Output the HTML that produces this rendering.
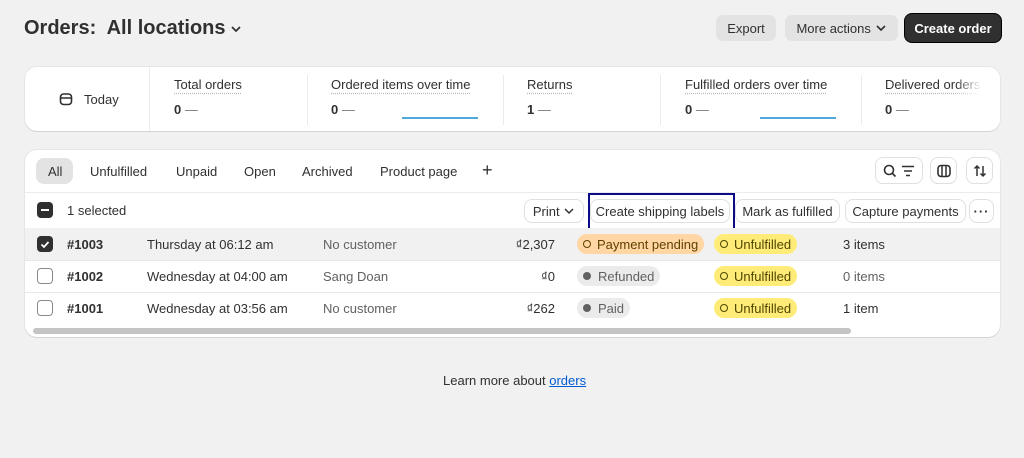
<!DOCTYPE html>
<html><head><style>
*{box-sizing:border-box;margin:0;padding:0}
body{width:1024px;height:458px;background:#f1f1f1;font-family:"Liberation Sans",sans-serif;color:#303030;position:relative;overflow:hidden;font-size:13px}
.a{position:absolute;white-space:nowrap}
.btn{position:absolute;background:#fff;border-radius:7px;box-shadow:0 0 0 1px #e0e0e0,0 1px 0 #ccc;font-size:13px;color:#303030;display:flex;align-items:center;justify-content:center}
.card{position:absolute;background:#fff;border-radius:12px;box-shadow:0 1px 0 #d4d4d4,0 0 0 1px #e6e6e6}
.dot{text-decoration:underline dotted #bbb;text-underline-offset:4px}
.pill{position:absolute;height:20px;border-radius:10px;font-size:13px;display:flex;align-items:center;padding:0 6px 0 6px}
.ring{width:8px;height:8px;border:1.5px solid currentColor;border-radius:50%;margin-right:6px}
.fill{width:8px;height:8px;background:#616161;border-radius:50%;margin-right:7px}
.cb{position:absolute;width:16px;height:16px;border-radius:4px;border:1.5px solid #8a8a8a;background:#fff}
</style></head><body>
<div class="a" style="left:24px;top:17px;font-size:20px;font-weight:bold;color:#303030">Orders:&nbsp; All locations</div>
<svg class="a" style="left:229px;top:22px" width="14" height="14"><path d="M3 5l4 4 4-4" fill="none" stroke="#303030" stroke-width="1.7"/></svg>
<div class="btn" style="left:716px;top:15px;width:60px;height:26px;background:#e3e3e3;box-shadow:none">Export</div>
<div class="btn" style="left:785px;top:15px;width:113px;height:26px;background:#e3e3e3;box-shadow:none">More actions&nbsp;<svg width="12" height="12"><path d="M2 4l4 4 4-4" fill="none" stroke="#303030" stroke-width="1.6"/></svg></div>
<div class="btn" style="left:905px;top:14px;width:96px;height:28px;background:#303030;color:#fff;font-weight:bold;box-shadow:0 0 0 1px #000">Create order</div>

<div class="card" style="left:25px;top:67px;width:975px;height:64px;overflow:hidden">
<svg class="a" style="left:34px;top:25px" width="14" height="14"><rect x="1.5" y="2" width="11" height="10.5" rx="3" fill="none" stroke="#303030" stroke-width="1.6"/><path d="M2 6h10" stroke="#303030" stroke-width="1.6"/></svg>
<div class="a" style="left:59px;top:25px">Today</div>
<div class="a" style="left:124px;top:0;width:1px;height:64px;background:#ebebeb"></div>
<div class="a dot" style="left:149px;top:10px">Total orders</div><div class="a" style="left:149px;top:35px;font-weight:bold">0 <span style="font-weight:normal;color:#777">—</span></div>
<div class="a" style="left:282px;top:8px;width:1px;height:50px;background:#ebebeb"></div>
<div class="a dot" style="left:306px;top:10px">Ordered items over time</div><div class="a" style="left:306px;top:35px;font-weight:bold">0 <span style="font-weight:normal;color:#777">—</span></div>
<div class="a" style="left:377px;top:50px;width:76px;height:2px;background:#4fa8d8"></div>
<div class="a" style="left:478px;top:8px;width:1px;height:50px;background:#ebebeb"></div>
<div class="a dot" style="left:502px;top:10px">Returns</div><div class="a" style="left:502px;top:35px;font-weight:bold">1 <span style="font-weight:normal;color:#777">—</span></div>
<div class="a" style="left:635px;top:8px;width:1px;height:50px;background:#ebebeb"></div>
<div class="a dot" style="left:660px;top:10px">Fulfilled orders over time</div><div class="a" style="left:660px;top:35px;font-weight:bold">0 <span style="font-weight:normal;color:#777">—</span></div>
<div class="a" style="left:735px;top:50px;width:76px;height:2px;background:#4fa8d8"></div>
<div class="a" style="left:836px;top:8px;width:1px;height:50px;background:#ebebeb"></div>
<div class="a dot" style="left:860px;top:10px">Delivered orders</div><div class="a" style="left:860px;top:35px;font-weight:bold">0 <span style="font-weight:normal;color:#777">—</span></div>
<div class="a" style="left:930px;top:0;width:45px;height:64px;background:linear-gradient(90deg,rgba(255,255,255,0),#fff 60%)"></div>
</div>

<div class="card" style="left:25px;top:150px;width:975px;height:187px;overflow:hidden">
<div class="a" style="left:11px;top:8px;width:37px;height:26px;background:#e3e3e3;border-radius:8px"></div>
<div class="a" style="left:23px;top:14px">All</div>
<div class="a" style="left:65px;top:14px">Unfulfilled</div>
<div class="a" style="left:151px;top:14px">Unpaid</div>
<div class="a" style="left:219px;top:14px">Open</div>
<div class="a" style="left:277px;top:14px">Archived</div>
<div class="a" style="left:355px;top:14px">Product page</div>
<div class="a" style="left:457px;top:10px;font-size:18px">+</div>
<div class="btn" style="left:851px;top:8px;width:46px;height:25px"><svg width="34" height="16"><circle cx="7" cy="7" r="4.5" fill="none" stroke="#303030" stroke-width="1.6"/><path d="M10.5 10.5l3 3M20 3.5h12M22 8h8M24 12.5h4" stroke="#303030" stroke-width="1.6" fill="none"/></svg></div>
<div class="btn" style="left:906px;top:8px;width:25px;height:25px"><svg width="14" height="14"><rect x="1" y="1.5" width="12" height="11" rx="3" fill="none" stroke="#303030" stroke-width="1.6"/><path d="M5 2v10M9 2v10" stroke="#303030" stroke-width="1.5"/></svg></div>
<div class="btn" style="left:942px;top:8px;width:25px;height:25px"><svg width="14" height="14"><path d="M4 12V2M1.5 4.5L4 2l2.5 2.5M10 2v10M7.5 9.5L10 12l2.5-2.5" fill="none" stroke="#303030" stroke-width="1.5"/></svg></div>
<div class="a" style="left:0;top:42px;width:975px;height:1px;background:#ebebeb"></div>
<div class="a" style="left:12px;top:52px;width:16px;height:16px;border-radius:4px;background:#303030"><div style="position:absolute;left:4px;top:7px;width:8px;height:2px;background:#fff"></div></div>
<div class="a" style="left:42px;top:53px">1 selected</div>
<div class="btn" style="left:500px;top:50px;width:58px;height:22px">Print&nbsp;<svg width="12" height="12"><path d="M2 4l4 4 4-4" fill="none" stroke="#303030" stroke-width="1.5"/></svg></div>
<div class="btn" style="left:566px;top:50px;width:138px;height:22px">Create shipping labels</div>
<div class="a" style="left:563px;top:43px;width:147px;height:37px;border:2.5px solid #0b0b8a"></div>
<div class="btn" style="left:711px;top:50px;width:103px;height:22px">Mark as fulfilled</div>
<div class="btn" style="left:821px;top:50px;width:119px;height:22px">Capture payments</div>
<div class="btn" style="left:945px;top:50px;width:23px;height:22px;font-weight:bold;letter-spacing:1px">···</div>
<div class="a" style="left:0;top:78px;width:975px;height:32px;background:#f1f1f1"></div>
<div class="a" style="left:0;top:110px;width:975px;height:1px;background:#e8e8e8"></div>
<div class="a" style="left:0;top:142px;width:975px;height:1px;background:#e8e8e8"></div>
<div class="a" style="left:12px;top:86px;width:16px;height:16px;border-radius:4px;background:#303030"><svg style="position:absolute;left:2px;top:2px" width="12" height="12"><path d="M2.5 6.5l2.5 2.5 4.5-5" fill="none" stroke="#fff" stroke-width="1.8"/></svg></div>
<div class="a" style="left:42px;top:87px;font-weight:bold">#1003</div>
<div class="a" style="left:122px;top:87px">Thursday at 06:12 am</div>
<div class="a" style="left:298px;top:87px;color:#616161">No customer</div>
<div class="a" style="left:470px;top:87px;width:60px;text-align:right">₫2,307</div>
<div class="pill" style="left:552px;top:84px;background:#ffd6a4;color:#5e4200"><div class="ring"></div>Payment pending</div>
<div class="pill" style="left:689px;top:84px;background:#ffeb78;color:#4f4700"><div class="ring"></div>Unfulfilled</div>
<div class="a" style="left:818px;top:87px">3 items</div>

<div class="cb" style="left:12px;top:118px"></div>
<div class="a" style="left:42px;top:119px;font-weight:bold">#1002</div>
<div class="a" style="left:122px;top:119px">Wednesday at 04:00 am</div>
<div class="a" style="left:298px;top:119px;color:#616161">Sang Doan</div>
<div class="a" style="left:470px;top:119px;width:60px;text-align:right">₫0</div>
<div class="pill" style="left:552px;top:116px;background:#ebebeb;color:#616161"><div class="fill"></div>Refunded</div>
<div class="pill" style="left:689px;top:116px;background:#ffeb78;color:#4f4700"><div class="ring"></div>Unfulfilled</div>
<div class="a" style="left:818px;top:119px;color:#616161">0 items</div>

<div class="cb" style="left:12px;top:150px"></div>
<div class="a" style="left:42px;top:151px;font-weight:bold">#1001</div>
<div class="a" style="left:122px;top:151px">Wednesday at 03:56 am</div>
<div class="a" style="left:298px;top:151px;color:#616161">No customer</div>
<div class="a" style="left:470px;top:151px;width:60px;text-align:right">₫262</div>
<div class="pill" style="left:552px;top:148px;background:#ebebeb;color:#616161"><div class="fill"></div>Paid</div>
<div class="pill" style="left:689px;top:148px;background:#ffeb78;color:#4f4700"><div class="ring"></div>Unfulfilled</div>
<div class="a" style="left:818px;top:151px">1 item</div>
<div class="a" style="left:8px;top:178px;width:818px;height:6px;border-radius:3px;background:#c4c4c4"></div>
</div>

<div class="a" style="left:443px;top:373px;color:#303030">Learn more about <span style="color:#005bd3;text-decoration:underline">orders</span></div>
</body></html>
